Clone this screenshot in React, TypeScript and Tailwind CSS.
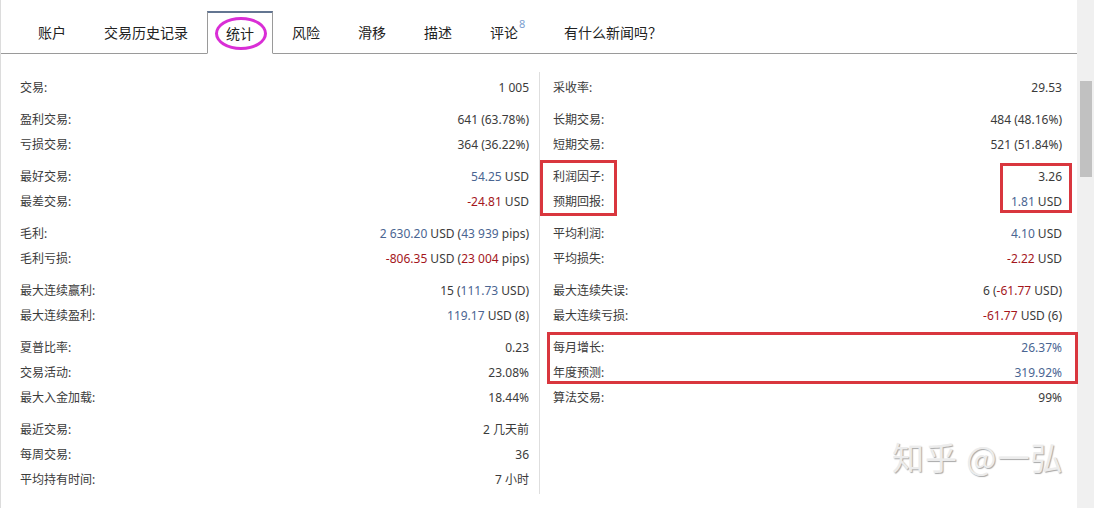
import React from 'react';

type Seg = [string, 'd' | 'b' | 'r'];
type Row = { label: string; value: Seg[] };

const tone: Record<Seg[1], string> = {
  d: 'text-[#3b3b3b]',
  b: 'text-[#4a6592]',
  r: 'text-[#a4161c]',
};

const leftGroups: Row[][] = [
  [{ label: '交易:', value: [['1 005', 'd']] }],
  [
    { label: '盈利交易:', value: [['641 (63.78%)', 'd']] },
    { label: '亏损交易:', value: [['364 (36.22%)', 'd']] },
  ],
  [
    { label: '最好交易:', value: [['54.25', 'b'], [' USD', 'd']] },
    { label: '最差交易:', value: [['-24.81', 'r'], [' USD', 'd']] },
  ],
  [
    { label: '毛利:', value: [['2 630.20', 'b'], [' USD (', 'd'], ['43 939', 'b'], [' pips)', 'd']] },
    { label: '毛利亏损:', value: [['-806.35', 'r'], [' USD (', 'd'], ['23 004', 'r'], [' pips)', 'd']] },
  ],
  [
    { label: '最大连续赢利:', value: [['15 (', 'd'], ['111.73', 'b'], [' USD)', 'd']] },
    { label: '最大连续盈利:', value: [['119.17', 'b'], [' USD (8)', 'd']] },
  ],
  [
    { label: '夏普比率:', value: [['0.23', 'd']] },
    { label: '交易活动:', value: [['23.08%', 'd']] },
    { label: '最大入金加载:', value: [['18.44%', 'd']] },
  ],
  [
    { label: '最近交易:', value: [['2 几天前', 'd']] },
    { label: '每周交易:', value: [['36', 'd']] },
    { label: '平均持有时间:', value: [['7 小时', 'd']] },
  ],
];

const rightGroups: Row[][] = [
  [{ label: '采收率:', value: [['29.53', 'd']] }],
  [
    { label: '长期交易:', value: [['484 (48.16%)', 'd']] },
    { label: '短期交易:', value: [['521 (51.84%)', 'd']] },
  ],
  [
    { label: '利润因子:', value: [['3.26', 'd']] },
    { label: '预期回报:', value: [['1.81', 'b'], [' USD', 'd']] },
  ],
  [
    { label: '平均利润:', value: [['4.10', 'b'], [' USD', 'd']] },
    { label: '平均损失:', value: [['-2.22', 'r'], [' USD', 'd']] },
  ],
  [
    { label: '最大连续失误:', value: [['6 (', 'd'], ['-61.77', 'r'], [' USD)', 'd']] },
    { label: '最大连续亏损:', value: [['-61.77', 'r'], [' USD (6)', 'd']] },
  ],
  [
    { label: '每月增长:', value: [['26.37%', 'b']] },
    { label: '年度预测:', value: [['319.92%', 'b']] },
    { label: '算法交易:', value: [['99%', 'd']] },
  ],
];

const tabs = ['账户', '交易历史记录', '统计', '风险', '滑移', '描述', '评论', '有什么新闻吗？'];

const Column: React.FC<{ groups: Row[][]; className: string }> = ({ groups, className }) => (
  <div className={className}>
    {groups.map((g, gi) => (
      <div key={gi} className={gi === 0 ? '' : 'mt-[7px]'}>
        {g.map((r) => (
          <div key={r.label} className="h-[25px] flex items-center justify-between text-[12px]">
            <span className="text-[#3b3b3b]">{r.label}</span>
            <span>
              {r.value.map(([t, c], i) => (
                <span key={i} className={tone[c]}>
                  {t}
                </span>
              ))}
            </span>
          </div>
        ))}
      </div>
    ))}
  </div>
);

export default function App() {
  return (
    <div
      className="relative w-[1094px] h-[508px] bg-white flex overflow-hidden"
      style={{ fontFamily: '"Noto Sans", "Noto Sans CJK SC", sans-serif' }}
    >
      <div className="flex-1 border-l border-[#dcdcdc]">
        {/* tab bar */}
        <div className="pt-[11px] pl-[18px] flex border-b border-[#9a9a9a]">
          {tabs.map((t) => {
            const active = t === '统计';
            return (
              <div
                key={t}
                className={`h-[43px] px-[18px] flex items-center text-[14px] text-[#222] border-x -mb-px ${
                  active
                    ? 'bg-white border-[#9a9a9a] border-t-2 border-t-[#637591] border-b border-b-white'
                    : 'border-transparent'
                }`}
              >
                <span className="relative">
                  {t}
                  {t === '评论' && (
                    <span className="absolute left-full top-[-4px] ml-[1px] text-[11px] leading-none text-[#7d9fd0]">
                      8
                    </span>
                  )}
                </span>
                {t === '评论' && <span className="w-[8px]" />}
              </div>
            );
          })}
        </div>

        {/* stats */}
        <div className="grid grid-cols-[539px_1fr] mt-[18px]">
          <Column groups={leftGroups} className="pt-[3px] pl-[19px] pr-[10px] pb-[2px] border-r border-[#dedede]" />
          <Column groups={rightGroups} className="pt-[3px] pl-[13px] pr-[15px]" />
        </div>
      </div>

      {/* scrollbar */}
      <div className="w-[17px] bg-[#f0f0f0] pt-[81px] flex justify-center">
        <div className="w-[12px] h-[96px] bg-[#c1c1c1]" />
      </div>

      {/* annotations */}
      <div className="absolute left-[215px] top-[17px] w-[52px] h-[33px] rounded-[50%] border-[3px] border-[#d92ed6]" />
      <div className="absolute left-[540px] top-[160px] w-[77px] h-[56px] border-[3px] border-[#d9363e]" />
      <div className="absolute left-[1000px] top-[163px] w-[72px] h-[50px] border-[3px] border-[#d9363e]" />
      <div className="absolute left-[547px] top-[332px] w-[531px] h-[52px] border-[3px] border-[#d9363e]" />

      <div
        className="absolute left-[892px] top-[432px] text-[32px] text-[#ececec] tracking-[1px]"
        style={{ fontFamily: '"Noto Sans CJK SC", sans-serif', textShadow: '1px 1px 1px #a8a8a8' }}
      >
        知乎 @一弘
      </div>
    </div>
  );
}
